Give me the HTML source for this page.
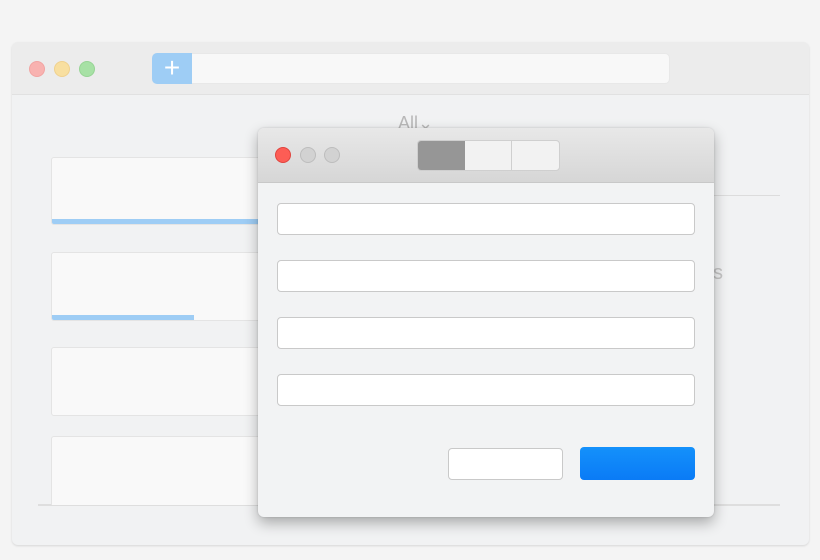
<!DOCTYPE html>
<html><head><style>
body{margin:0;width:820px;height:560px;background:#f4f4f4;position:relative;overflow:hidden;font-family:"Liberation Sans",sans-serif}
.a{position:absolute;box-sizing:border-box}
.dot{position:absolute;width:16px;height:16px;border-radius:50%;box-sizing:border-box}
</style></head><body>
<div class="a" style="left:12px;top:42px;width:797px;height:503px;background:#f1f2f3;border-radius:6px;box-shadow:0 1px 2px rgba(0,0,0,.12)">
 <div class="a" style="left:0;top:0;width:797px;height:53px;background:#ececec;border-bottom:1px solid #e1e1e1;border-radius:6px 6px 0 0"></div>
</div>
<div class="dot" style="left:29px;top:61px;background:#f8b2b0;border:1px solid #f1a4a2"></div>
<div class="dot" style="left:54px;top:61px;background:#f8dfa0;border:1px solid #efd18e"></div>
<div class="dot" style="left:79px;top:61px;background:#a7e1a5;border:1px solid #97d495"></div>
<div class="a" style="left:152px;top:53px;width:518px;height:31px;background:#f8f8f8;border:1px solid #e8e8e8;border-radius:5px"></div>
<div class="a" style="left:152px;top:53px;width:40px;height:31px;background:#9ecdf5;border-radius:5px 0 0 5px;color:#fff;font-size:28px;line-height:29px;text-align:center;font-weight:300">+</div>
<div class="a" style="left:398px;top:113px;color:#b8b8b8;font-size:18px">All⌄</div>
<div class="a" style="left:713px;top:262px;color:#c4c4c4;font-size:20px">s</div>
<div class="a" style="left:700px;top:195px;width:80px;height:1px;background:#dcdcdc"></div>
<div class="a" style="left:38px;top:504px;width:742px;height:2px;background:#dedede"></div>
<div class="a" style="left:51px;top:157px;width:230px;height:68px;background:#f9f9f9;border:1px solid #e4e4e4;border-radius:3px;overflow:hidden"><div class="a" style="left:0;bottom:0;width:230px;height:5px;background:#9ecdf5"></div></div>
<div class="a" style="left:51px;top:252px;width:230px;height:69px;background:#f9f9f9;border:1px solid #e4e4e4;border-radius:3px;overflow:hidden"><div class="a" style="left:0;bottom:0;width:142px;height:5px;background:#9ecdf5"></div></div>
<div class="a" style="left:51px;top:347px;width:230px;height:69px;background:#f9f9f9;border:1px solid #e4e4e4;border-radius:3px"></div>
<div class="a" style="left:51px;top:436px;width:230px;height:69px;background:#f9f9f9;border:1px solid #e4e4e4;border-bottom:none;border-radius:3px 3px 0 0"></div>

<div class="a" style="left:258px;top:128px;width:456px;height:389px;background:#f2f3f4;border-radius:6px;box-shadow:0 6px 14px rgba(0,0,0,.3),0 0 2px rgba(0,0,0,.15);overflow:hidden">
 <div class="a" style="left:0;top:0;width:456px;height:55px;background:linear-gradient(#e8e8e8,#d6d6d6);border-bottom:1px solid #c8c8c8"></div>
</div>
<div class="dot" style="left:275px;top:147px;background:#fd5d55;border:1px solid #e0443e"></div>
<div class="dot" style="left:300px;top:147px;background:#d2d2d2;border:1px solid #bdbdbd"></div>
<div class="dot" style="left:324px;top:147px;background:#d2d2d2;border:1px solid #bdbdbd"></div>
<div class="a" style="left:417px;top:140px;width:143px;height:31px;border:1px solid #cfcfcf;border-radius:4px;background:#f2f2f2;overflow:hidden">
 <div class="a" style="left:0;top:0;width:47px;height:31px;background:#969696"></div>
 <div class="a" style="left:93px;top:0;width:1px;height:31px;background:#cfcfcf"></div>
</div>
<div class="a" style="left:277px;top:203px;width:418px;height:32px;background:#fff;border:1px solid #c9c9c9;border-radius:4px"></div>
<div class="a" style="left:277px;top:260px;width:418px;height:32px;background:#fff;border:1px solid #c9c9c9;border-radius:4px"></div>
<div class="a" style="left:277px;top:317px;width:418px;height:32px;background:#fff;border:1px solid #c9c9c9;border-radius:4px"></div>
<div class="a" style="left:277px;top:374px;width:418px;height:32px;background:#fff;border:1px solid #c9c9c9;border-radius:4px"></div>
<div class="a" style="left:448px;top:448px;width:115px;height:32px;background:#fff;border:1px solid #c9c9c9;border-radius:4px"></div>
<div class="a" style="left:580px;top:447px;width:115px;height:33px;background:linear-gradient(#1491fb,#0a7bf6);border-radius:4px"></div>
</body></html>
